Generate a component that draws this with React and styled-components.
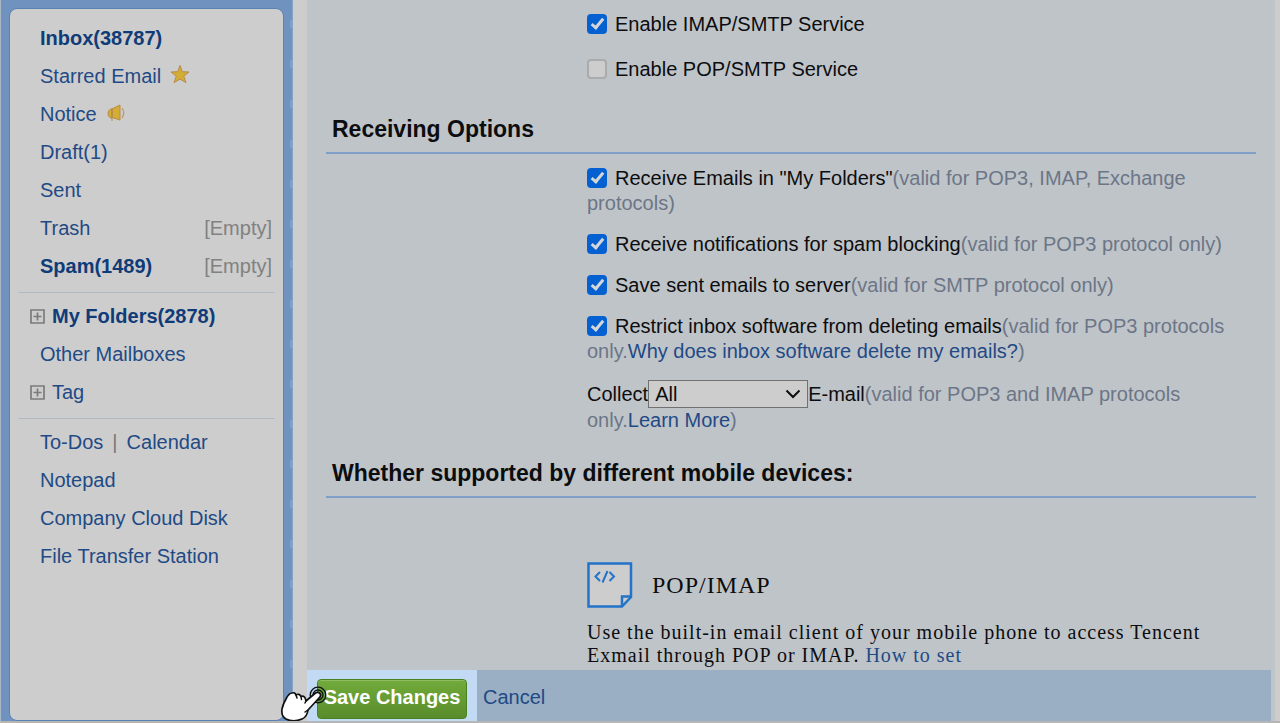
import React from "react";
import styled, { createGlobalStyle, css } from "styled-components";

const sans = '"Liberation Sans", Arial, sans-serif';
const serif = '"Liberation Serif", "Times New Roman", serif';

const GlobalStyle = createGlobalStyle`
  * { box-sizing: border-box; }
  body { margin: 0; background: #cdcdcd; font: 20px/25px ${sans}; color: #0c0d0e; }
`;

const Page = styled.div`
  display: flex;
  height: 100vh;
  border-bottom: 2px solid #b6b6b6;
  overflow: hidden;
`;

const Sidebar = styled.nav`
  flex: none;
  width: 293px;
  padding: 8px 8px 0;
  border-left: 1px solid #a9b6c4;
  border-right: 1px solid #86a2c4;
  background: repeating-linear-gradient(#7fa0c8 0 8px, transparent 8px 40px) right 0 top 20px / 2px 100% no-repeat, #6f93be;
  display: flex;
`;

const Card = styled.div`
  flex: 1;
  padding: 10px 8px 0 9px;
  border: 1px solid #5a82b4;
  border-radius: 8px;
  background: #cdcdcd;
`;

const FolderList = styled.ul`
  list-style: none;
  margin: 0;
  padding: 0;
  & + & {
    margin-top: 7px;
    padding-top: 4px;
    border-top: 1px solid #b0b8c1;
  }
`;

const FolderRow = styled.li`
  display: flex;
  align-items: center;
  height: 38px;
  padding: 0 3px 0 ${(p) => (p.$expandable ? "11px" : "21px")};
  gap: ${(p) => (p.$expandable ? "7px" : "9px")};
`;

const FolderLink = styled.a`
  color: ${(p) => (p.$bold ? "#0f3c78" : "#1f4a85")};
  font-weight: ${(p) => (p.$bold ? 700 : 400)};
  text-decoration: none;
  white-space: nowrap;
`;

const EmptyButton = styled.button`
  margin-left: auto;
  padding: 0;
  border: 0;
  background: none;
  font: inherit;
  color: #818181;
`;

const Divider = styled.span`
  color: #777;
`;

const Expander = styled.button`
  display: flex;
  padding: 0;
  border: 0;
  background: none;
`;

const Main = styled.main`
  flex: 1;
  min-width: 0;
  margin: 0 5px 0 14px;
  background: #bfc4c9;
  display: flex;
  flex-direction: column;
`;

const Settings = styled.div`
  flex: 1;
  min-height: 0;
  overflow: hidden;
  padding: 0 19px;
`;

const SectionTitle = styled.h2`
  margin: 0;
  padding: 0 6px 9px;
  border-bottom: 2px solid #7f9fc9;
  font-size: 23px;
  line-height: 28px;
  font-weight: 700;
`;

const OptionList = styled.div`
  display: flex;
  flex-direction: column;
  gap: ${(p) => p.$gap}px;
  padding: ${(p) => p.$top}px 18px ${(p) => p.$bottom}px 261px;
`;

const Option = styled.div`
  line-height: 25px;
`;

const CheckInput = styled.input`
  appearance: none;
  position: relative;
  width: 20px;
  height: 20px;
  margin: 0 8px 0 0;
  vertical-align: -3px;
  border: 2px solid #a9abad;
  border-radius: 4px;
  background: #cdcdcd;
  &:checked {
    border-color: #0560d2;
    background: #0560d2;
  }
  &:checked::after {
    content: "";
    position: absolute;
    left: 5px;
    top: 0;
    width: 4px;
    height: 10px;
    border: solid #d4d7da;
    border-width: 0 3px 3px 0;
    transform: rotate(40deg);
  }
`;

const Hint = styled.span`
  color: #6c7687;
`;

const HintLink = styled.a`
  color: #1f4a85;
  text-decoration: none;
`;

const SelectBox = styled.span`
  position: relative;
  display: inline-block;
  svg {
    position: absolute;
    right: 7px;
    top: 8px;
    pointer-events: none;
  }
`;

const Select = styled.select`
  appearance: none;
  width: 160px;
  height: 28px;
  padding: 0 6px;
  border: 1px solid #6f7173;
  border-radius: 0;
  background: #cdcdcd;
  color: #0c0d0e;
  font: inherit;
`;

const Device = styled.section`
  padding: 64px 50px 0 261px;
  font-family: ${serif};
  font-size: 20px;
  line-height: 23px;
  letter-spacing: 1px;
`;

const DeviceHead = styled.div`
  display: flex;
  align-items: center;
  gap: 19px;
  margin-bottom: 13px;
`;

const DeviceTitle = styled.h3`
  margin: 0;
  font-size: 24px;
  font-weight: 400;
`;

const DeviceText = styled.p`
  margin: 0;
`;

const Footer = styled.footer`
  flex: none;
  display: flex;
  height: 51px;
  margin-right: 4px;
  background: #9aaec4;
`;

const Spotlight = styled.div`
  position: relative;
  padding: 9px 10px 0;
  background: #c3daf4;
`;

const buttonText = css`
  font-family: ${sans};
  font-size: 20px;
  cursor: pointer;
`;

const SaveButton = styled.button`
  ${buttonText}
  width: 150px;
  height: 40px;
  padding: 0 0 3px;
  border: 1px solid #48811f;
  border-radius: 4px;
  background: linear-gradient(#72ab3b, #588c2b);
  box-shadow: inset 0 1px #8dbd60;
  color: #fff;
  font-weight: 700;
  white-space: nowrap;
`;

const CancelButton = styled.button`
  ${buttonText}
  padding: 4px 6px 0;
  border: 0;
  background: none;
  color: #1f4a85;
`;

const Pointer = styled.svg`
  position: absolute;
  left: -28px;
  top: 14px;
`;

const Star = () => (
  <svg width="20" height="24" viewBox="0 0 20 24" aria-hidden="true">
    <path d="M10 1.500l2.300 6.200 6.700.3-5.200 4.200 2.200 6.500L10 15l-6 3.700 2.200-6.500L1 8l6.700-.3z" fill="#d3ae35" stroke="#b98a4a" />
  </svg>
);

const Horn = () => (
  <svg width="20" height="22" viewBox="0 0 20 22" aria-hidden="true">
    <path d="M6 6v9H4.500Q2 13.500 2 10.500T4.500 6zM6 6l8-4v15l-8-2.500z" fill="#d3ae35" stroke="#b98a4a" />
    <path d="M6 5.500V18" stroke="#b98a4a" />
    <path d="M16 5q3.500 5 0 10" fill="none" stroke="#c29a68" strokeWidth="1.300" />
  </svg>
);

const Plus = () => (
  <svg width="15" height="15" viewBox="0 0 15 15" aria-hidden="true">
    <path d="M1 1h13v13H1zM7.500 3.500v8M3.500 7.500h8" fill="none" stroke="#7b7b7b" strokeWidth="1.700" />
  </svg>
);

const CodeNote = () => (
  <svg width="46" height="46" viewBox="0 0 46 46" fill="none" stroke="#2373c8" strokeWidth="2.500" aria-hidden="true">
    <path d="M1.500 1.500h42.500v33.500l-9 9.500H1.500z" fill="#cdcdcd" />
    <path d="M35 44.500V34.500h9" />
    <path d="M13 10l-4.500 4.500L13 19M22.500 10l4.500 4.500-4.500 4.500M20.500 9l-5 11.500" strokeWidth="2" />
  </svg>
);

const folders = [
  { name: "Inbox(38787)", bold: true },
  { name: "Starred Email", icon: <Star /> },
  { name: "Notice", icon: <Horn /> },
  { name: "Draft(1)" },
  { name: "Sent" },
  { name: "Trash", empty: true },
  { name: "Spam(1489)", bold: true, empty: true },
];
const groups = [
  { name: "My Folders(2878)", bold: true, expandable: true },
  { name: "Other Mailboxes" },
  { name: "Tag", expandable: true },
];
const tools = ["Notepad", "Company Cloud Disk", "File Transfer Station"];

function Folder({ name, bold, icon, empty, expandable }) {
  return (
    <FolderRow $expandable={expandable}>
      {expandable && <Expander aria-label={`Expand ${name}`}><Plus /></Expander>}
      <FolderLink href="#" $bold={bold}>{name}</FolderLink>
      {icon}
      {empty && <EmptyButton>[Empty]</EmptyButton>}
    </FolderRow>
  );
}

function CheckOption({ id, label, checked, children }) {
  return (
    <Option>
      <CheckInput type="checkbox" id={id} defaultChecked={checked} />
      <label htmlFor={id}>{label}</label>
      {children && <Hint>{children}</Hint>}
    </Option>
  );
}

export default function App() {
  return (
    <>
      <GlobalStyle />
      <Page>
        <Sidebar>
          <Card>
            <FolderList>{folders.map((f) => <Folder key={f.name} {...f} />)}</FolderList>
            <FolderList>{groups.map((f) => <Folder key={f.name} {...f} />)}</FolderList>
            <FolderList>
              <FolderRow>
                <FolderLink href="#">To-Dos</FolderLink>
                <Divider>|</Divider>
                <FolderLink href="#">Calendar</FolderLink>
              </FolderRow>
              {tools.map((t) => <Folder key={t} name={t} />)}
            </FolderList>
          </Card>
        </Sidebar>
        <Main>
          <Settings>
            <OptionList $gap={20} $top={12} $bottom={33}>
              <CheckOption id="imap" label="Enable IMAP/SMTP Service" checked />
              <CheckOption id="pop" label="Enable POP/SMTP Service" />
            </OptionList>
            <SectionTitle>Receiving Options</SectionTitle>
            <OptionList $gap={16} $top={12} $bottom={26}>
              <CheckOption id="folders" label={'Receive Emails in "My Folders"'} checked>
                (valid for POP3, IMAP, Exchange protocols)
              </CheckOption>
              <CheckOption id="spam" label="Receive notifications for spam blocking" checked>
                (valid for POP3 protocol only)
              </CheckOption>
              <CheckOption id="sent" label="Save sent emails to server" checked>
                (valid for SMTP protocol only)
              </CheckOption>
              <CheckOption id="restrict" label="Restrict inbox software from deleting emails" checked>
                (valid for POP3 protocols only.<HintLink href="#">Why does inbox software delete my emails?</HintLink>)
              </CheckOption>
              <Option>
                <label htmlFor="collect">Collect</label>
                <SelectBox>
                  <Select id="collect"><option>All</option></Select>
                  <svg width="16" height="12" viewBox="0 0 16 12" fill="none" stroke="#0c0d0e" strokeWidth="2" aria-hidden="true">
                    <path d="M1.500 2.500L8 9l6.500-6.500" />
                  </svg>
                </SelectBox>
                E-mail<Hint>(valid for POP3 and IMAP protocols only.<HintLink href="#">Learn More</HintLink>)</Hint>
              </Option>
            </OptionList>
            <SectionTitle>Whether supported by different mobile devices:</SectionTitle>
            <Device>
              <DeviceHead>
                <CodeNote />
                <DeviceTitle>POP/IMAP</DeviceTitle>
              </DeviceHead>
              <DeviceText>
                Use the built-in email client of your mobile phone to access Tencent Exmail through POP or IMAP.{" "}
                <HintLink href="#">How to set</HintLink>
              </DeviceText>
            </Device>
          </Settings>
          <Footer>
            <Spotlight>
              <SaveButton>Save Changes</SaveButton>
              <Pointer width="50" height="39" viewBox="0 0 50 39" aria-hidden="true">
                <g fill="none" stroke="#111" strokeWidth="1.300">
                  <circle cx="39" cy="11" r="5" />
                  <circle cx="39" cy="11" r="7.800" />
                </g>
                <path
                  d="M3 25Q4 20 7 15Q10 9 13 9Q16 8 17 11Q20 9 22 12.500Q26 11 27 17L36.500 9Q39 7.500 41 9.500Q42.500 12 40 14L29 26Q28 33 23 35Q14 38.500 7 35Q2 32 3 25z"
                  fill="#fff" stroke="#111" strokeWidth="1.700" strokeLinejoin="round"
                />
                <path d="M17 11l1 3M22 12.500l.500 3M27 17l-1 2M29 26l-3 2" fill="none" stroke="#111" strokeWidth="1.500" strokeLinecap="round" />
              </Pointer>
            </Spotlight>
            <CancelButton>Cancel</CancelButton>
          </Footer>
        </Main>
      </Page>
    </>
  );
}
